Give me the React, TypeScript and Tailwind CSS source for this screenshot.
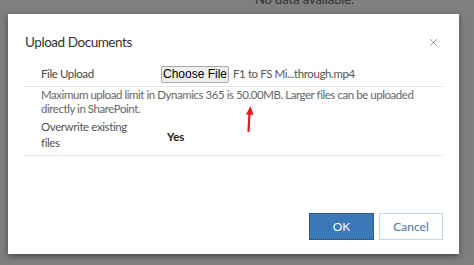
import { X } from "lucide-react";

const font = { fontFamily: 'Lato, "Open Sans", sans-serif' };

export default function App() {
  return (
    <div
      className="relative h-[265px] w-[474px] overflow-hidden bg-[#7f7f7f]"
      style={font}
    >
      {/* page behind the modal */}
      <div className="absolute left-[255px] top-[-10px] text-[13px] tracking-[-0.1px] text-[#333333] leading-[18px]">
        No data available.
      </div>

      <div className="relative ml-[8px] mt-[14px] flex h-[240px] w-[451px] flex-col bg-white px-[16px] shadow-[0_2px_6px_rgba(0,0,0,0.45)]">
        <div className="flex items-center justify-between pl-[1px] pt-[18px]">
          <h1 className="text-[13.5px] leading-[20px] tracking-[-0.45px] text-[#333333]">
            Upload Documents
          </h1>
          <X className="mr-[3px] h-[13px] w-[13px] text-[#777777]" strokeWidth={1.3} />
        </div>

        <div className="mt-[11px] flex h-[24px] items-center border-b border-[#e4e4e4] pl-[17px] pb-[1px] text-[11.5px] tracking-[-0.4px]">
          <div className="w-[120px] text-[#444444]">File Upload</div>
          <div className="flex items-center">
            <button
              className="h-[17px] w-[68px] rounded-[2px] border border-[#a9a9a9] bg-[#efefef] text-[12px] leading-[15px] tracking-normal text-black"
              style={{ fontFamily: '"Liberation Sans", Arial, sans-serif' }}
            >
              Choose File
            </button>
            <span className="ml-[4px] text-[#555555]">F1 to FS Mi...through.mp4</span>
          </div>
        </div>

        <div className="relative pl-[17px] pt-[1px] text-[11.5px] leading-[14px] tracking-[-0.45px] text-[#666666]">
          <div className="whitespace-nowrap">
            Maximum upload limit in Dynamics 365 is 50.00MB. Larger files can be uploaded
          </div>
          <div>directly in SharePoint.</div>
          <svg
            className="absolute left-[218px] top-[18px]"
            width="14"
            height="27"
            viewBox="0 0 14 27"
          >
            <path d="M7.5 8 L6.5 26" stroke="#e3191b" strokeWidth="2.2" strokeLinecap="round" />
            <path d="M8.5 1 L4 9.5 L11.5 10 Z" fill="#e3191b" />
          </svg>
        </div>

        <div className="flex items-center border-b border-[#e4e4e4] pb-[4px] pl-[17px] pt-[3px] text-[11.5px] tracking-[-0.4px]">
          <div className="w-[120px] leading-[16px] text-[#555555]">
            Overwrite existing
            <br />
            files
          </div>
          <div className="ml-[6px] mt-[3px] text-[11.5px] font-bold tracking-normal text-[#222222]">Yes</div>
        </div>

        <div className="mt-auto mb-[14px] flex justify-end gap-[5px]">
          <button className="h-[27px] w-[65px] bg-[#3b78b8] text-[12px] text-white outline-1 outline-dotted outline-[#1f3f66] -outline-offset-1">
            OK
          </button>
          <button className="h-[27px] w-[64px] border border-[#c3d6ea] bg-white text-[12px] text-[#4a76a8]">
            Cancel
          </button>
        </div>
      </div>
    </div>
  );
}
